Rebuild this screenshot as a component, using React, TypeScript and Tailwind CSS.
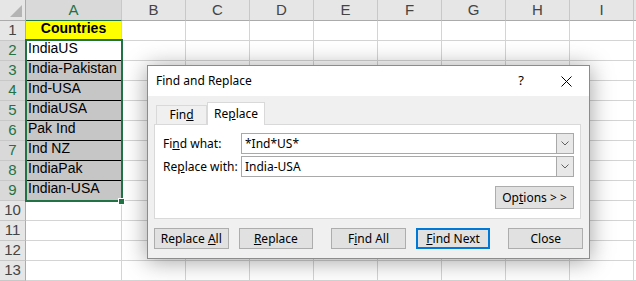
import { Fragment } from "react";

const COLS = ["A", "B", "C", "D", "E", "F", "G", "H", "I", "J"];
const VALUES = ["Countries", "IndiaUS", "India-Pakistan", "Ind-USA", "IndiaUSA", "Pak Ind", "Ind NZ", "IndiaPak", "Indian-USA"];
const ROWS = Array.from({ length: 13 }, (_, i) => i + 1);

function Combo({ value }: { value: string }) {
  return (
    <div className="flex h-[21px] w-[333px] border border-[#a9a9a9] bg-white">
      <div className="flex-1 pl-[3px] leading-[19px] text-black">{value}</div>
      <div className="flex w-[17px] items-center justify-center border-l border-[#a9a9a9] bg-[#e8e8e8]">
        <svg width="8" height="5" viewBox="0 0 8 5">
          <path d="M0.5 0.5 L4 4 L7.5 0.5" stroke="#606060" strokeWidth="1" fill="none" />
        </svg>
      </div>
    </div>
  );
}

function Btn({ children, className = "", primary = false }: { children: React.ReactNode; className?: string; primary?: boolean }) {
  return (
    <div
      className={
        "flex h-[21px] w-[75px] items-center justify-center bg-[#e1e1e1] text-black " +
        (primary ? "border-2 border-[#0078d7] " : "border border-[#adadad] ") +
        className
      }
    >
      <span className="whitespace-pre">{children}</span>
    </div>
  );
}

function Dialog() {
  return (
    <div className="absolute left-[147px] top-[65px] h-[194px] w-[443px] border border-[#8c8c8c] bg-[#f0f0f0] font-['Noto_Sans',sans-serif] text-[12px] text-black shadow-[0_2px_22px_rgba(0,0,0,0.38)]">
      {/* title bar */}
      <div className="flex h-[30px] items-center bg-white pl-[8px]">
        <span>Find and Replace</span>
        <span className="ml-auto w-[44px] text-center text-[13px]">?</span>
        <div className="flex h-full w-[46px] items-center justify-center">
          <svg width="11" height="11" viewBox="0 0 11 11">
            <path d="M0.5 0.5 L10.5 10.5 M10.5 0.5 L0.5 10.5" stroke="#000" strokeWidth="1" />
          </svg>
        </div>
      </div>

      <div className="px-[6px] pt-[6px]">
        {/* tabs */}
        <div className="flex h-[22px] items-end pl-[2px]">
          <div className="flex h-[19px] w-[51px] items-center justify-center border border-b-0 border-[#d9d9d9] bg-[#f0f0f0]">
            <span>Fin<u>d</u></span>
          </div>
          <div className="relative z-10 -mb-px flex h-[23px] w-[58px] items-center justify-center border border-b-0 border-[#d9d9d9] bg-white">
            <span>Re<u>p</u>lace</span>
          </div>
        </div>

        {/* panel */}
        <div className="w-[427px] border border-[#d9d9d9] bg-white px-[8px] pb-[9px] pt-[8px] pr-[6px]">
          <div className="flex items-center">
            <span className="w-[78px]">Fi<u>n</u>d what:</span>
            <Combo value="*Ind*US*" />
          </div>
          <div className="mt-[2px] flex items-center">
            <span className="w-[78px]">Re<u>p</u>lace with:</span>
            <Combo value="India-USA" />
          </div>
          <div className="mt-[9px] flex justify-end">
            <Btn className="h-[23px] w-[79px]">
              Op<u>t</u>ions {">"} {">"}
            </Btn>
          </div>
        </div>

        {/* buttons */}
        <div className="mt-[9px] flex">
          <Btn className="w-[74px]">
            Replace <u>A</u>ll
          </Btn>
          <Btn className="ml-[10px]">
            <u>R</u>eplace
          </Btn>
          <Btn className="ml-[18px] w-[74px]">
            F<u>i</u>nd All
          </Btn>
          <Btn className="ml-[10px]" primary>
            <u>F</u>ind Next
          </Btn>
          <Btn className="ml-[18px]">Close</Btn>
        </div>
      </div>
    </div>
  );
}

export default function App() {
  return (
    <div className="relative h-[281px] w-[636px] overflow-hidden bg-white font-['Liberation_Sans',Arial,sans-serif] text-[14px] text-black">
      <div className="grid grid-cols-[26px_96px_repeat(9,64px)] grid-rows-[21px_repeat(13,20px)]">
        {/* select-all corner */}
        <div className="flex items-end justify-end border-b border-r border-b-[#ababab] border-r-[#ababab] bg-[#e6e6e6] pb-[3px] pr-[3px]">
          <svg width="12" height="12" viewBox="0 0 12 12">
            <path d="M12 0 L12 12 L0 12 Z" fill="#b4b4b4" />
          </svg>
        </div>
        {COLS.map((c) => (
          <div
            key={c}
            className={
              "flex items-center justify-center border-b border-r border-r-[#c8c8c8] text-[15px] " +
              (c === "A" ? "border-b-[#217346] bg-[#d9d9d9] text-[#217346]" : "border-b-[#ababab] bg-[#e6e6e6] text-[#444]")
            }
          >
            {c === "J" ? "" : c}
          </div>
        ))}

        {ROWS.map((r) => {
          const sel = r >= 2 && r <= 9;
          return (
            <Fragment key={r}>
              <div
                className={
                  "flex items-center justify-center border-b border-r border-b-[#c8c8c8] text-[15px] " +
                  (sel ? "border-r-[#217346] bg-[#d9d9d9] text-[#217346]" : "border-r-[#ababab] bg-[#e6e6e6] text-[#444]")
                }
              >
                {r}
              </div>
              {COLS.map((c) => {
                if (c === "A" && r === 1) {
                  return (
                    <div key={c} className="flex items-end justify-center border-b border-r border-[#d4d4d4] bg-[#ffff00] pb-[1px] font-bold">
                      {VALUES[0]}
                    </div>
                  );
                }
                if (c === "A" && sel) {
                  return (
                    <div
                      key={c}
                      className={
                        "flex items-end border-b border-r border-b-black border-r-[#d4d4d4] pb-[1px] pl-[2px] " +
                        (r === 2 ? "bg-white" : "bg-[#c6c6c6]")
                      }
                    >
                      {VALUES[r - 1]}
                    </div>
                  );
                }
                return <div key={c} className="border-b border-r border-[#d4d4d4]" />;
              })}
            </Fragment>
          );
        })}
      </div>

      {/* selection outline + fill handle */}
      <div className="pointer-events-none absolute left-[25px] top-[39px] h-[163px] w-[98px] border-2 border-[#217346]" />
      <div className="absolute left-[118px] top-[198px] h-[7px] w-[7px] border border-white bg-[#217346]" />

      <Dialog />
    </div>
  );
}
